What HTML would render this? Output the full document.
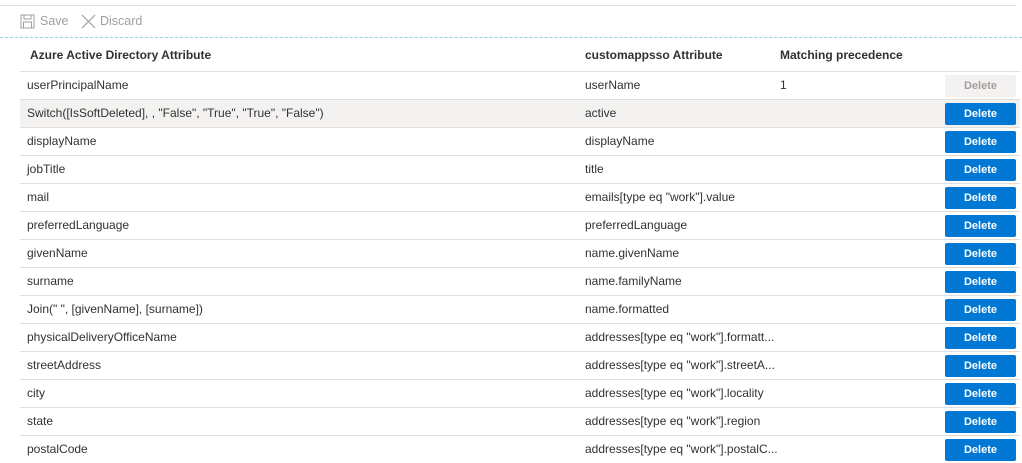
<!DOCTYPE html>
<html><head><style>
body{margin:0;width:1022px;height:462px;overflow:hidden;background:#fff;font-family:"Liberation Sans",sans-serif;font-size:12px;color:#323130;position:relative}
.top{position:absolute;left:0;top:5px;width:1016px;border-top:1px solid #e1dfdd}
.tb{position:absolute;top:14px;color:#a19f9d;font-size:12.5px}
.dash{position:absolute;left:0;top:37px;width:1022px;border-top:1px dashed #8fd3ea}
.hd{position:absolute;top:48px;font-weight:bold;font-size:12px;color:#323130}
.row{position:absolute;left:20px;width:1000px;height:27px;border-top:1px solid #e1dfdd}
.row span{position:absolute;top:6px}
.c1{left:7px}.c2{left:565px}.c3{left:760px}
.btn{position:absolute;left:925px;top:3px;width:71px;height:22px;background:#0078d4;color:#fff;font-weight:bold;font-size:11px;text-align:center;line-height:22px;border-radius:2px}
.dis{background:#f3f2f1;color:#a19f9d}
</style></head><body>
<div class="top"></div>
<svg style="position:absolute;left:20px;top:14px" width="15" height="15" viewBox="0 0 15 15" fill="none" stroke="#a19f9d"><rect x="1" y="1" width="13" height="13"/><rect x="4" y="1" width="7" height="4"/><rect x="3.5" y="8" width="8" height="6"/></svg>
<span class="tb" style="left:40px">Save</span>
<svg style="position:absolute;left:81px;top:14px" width="15" height="15" viewBox="0 0 15 15" stroke="#a19f9d" stroke-width="1.2"><path d="M1 1L14 14M14 1L1 14"/></svg>
<span class="tb" style="left:100px">Discard</span>
<div class="dash"></div>
<span class="hd" style="left:30px">Azure Active Directory Attribute</span>
<span class="hd" style="left:585px">customappsso Attribute</span>
<span class="hd" style="left:780px">Matching precedence</span>

<div class="row" style="top:71px"><span class="c1">userPrincipalName</span><span class="c2">userName</span><span class="c3">1</span><div class="btn dis">Delete</div></div>
<div class="row" style="top:99px;background:#f3f2f1"><span class="c1">Switch([IsSoftDeleted], , "False", "True", "True", "False")</span><span class="c2">active</span><div class="btn">Delete</div></div>
<div class="row" style="top:127px"><span class="c1">displayName</span><span class="c2">displayName</span><div class="btn">Delete</div></div>
<div class="row" style="top:155px"><span class="c1">jobTitle</span><span class="c2">title</span><div class="btn">Delete</div></div>
<div class="row" style="top:183px"><span class="c1">mail</span><span class="c2">emails[type eq "work"].value</span><div class="btn">Delete</div></div>
<div class="row" style="top:211px"><span class="c1">preferredLanguage</span><span class="c2">preferredLanguage</span><div class="btn">Delete</div></div>
<div class="row" style="top:239px"><span class="c1">givenName</span><span class="c2">name.givenName</span><div class="btn">Delete</div></div>
<div class="row" style="top:267px"><span class="c1">surname</span><span class="c2">name.familyName</span><div class="btn">Delete</div></div>
<div class="row" style="top:295px"><span class="c1">Join(" ", [givenName], [surname])</span><span class="c2">name.formatted</span><div class="btn">Delete</div></div>
<div class="row" style="top:323px"><span class="c1">physicalDeliveryOfficeName</span><span class="c2">addresses[type eq "work"].formatt...</span><div class="btn">Delete</div></div>
<div class="row" style="top:351px"><span class="c1">streetAddress</span><span class="c2">addresses[type eq "work"].streetA...</span><div class="btn">Delete</div></div>
<div class="row" style="top:379px"><span class="c1">city</span><span class="c2">addresses[type eq "work"].locality</span><div class="btn">Delete</div></div>
<div class="row" style="top:407px"><span class="c1">state</span><span class="c2">addresses[type eq "work"].region</span><div class="btn">Delete</div></div>
<div class="row" style="top:435px"><span class="c1">postalCode</span><span class="c2">addresses[type eq "work"].postalC...</span><div class="btn">Delete</div></div>
</body></html>
